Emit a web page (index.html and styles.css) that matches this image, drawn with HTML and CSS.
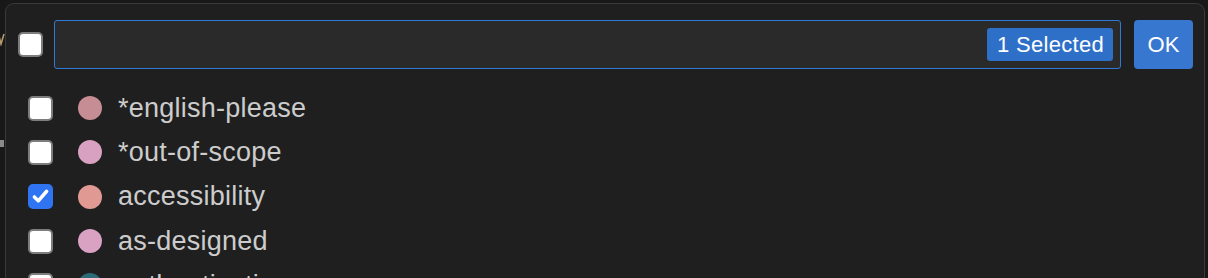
FILE: index.html
```html
<!DOCTYPE html>
<html lang="en">
  <head>
    <meta charset="UTF-8" />
    <meta name="viewport" content="width=device-width, initial-scale=1.0" />
    <title>Labels | Quick Pick</title>
    <link rel="stylesheet" href="styles.css">
  </head>
  <body>
    <div class="editor-edge">
      <svg class="edge-mark" viewBox="0 0 6 16" width="6" height="16">
        <path d="M-2 2l3 12 3-10" fill="none" stroke="#b59a6a" stroke-width="1.6" />
      </svg>
      <span class="edge-block"></span>
    </div>
    <div class="quick-pick">
      <div class="quick-header">
        <span class="check"></span>
        <div class="filter-box">
          <input type="text" />
          <span class="count-badge">1 Selected</span>
        </div>
        <button class="ok-button">OK</button>
      </div>
      <ul class="label-list">
        <li class="label-item">
          <span class="check"></span>
          <span class="dot" style="background: #c78d95"></span>
          <span class="label-name">*english-please</span>
        </li>
        <li class="label-item">
          <span class="check"></span>
          <span class="dot" style="background: #d9a1c1"></span>
          <span class="label-name">*out-of-scope</span>
        </li>
        <li class="label-item">
          <span class="check checked">
            <svg viewBox="0 0 24 24" width="21" height="21">
              <path d="M5 12.5l4.5 4.5L19 6" fill="none" stroke="#fff" stroke-width="4" stroke-linecap="round" stroke-linejoin="round" />
            </svg>
          </span>
          <span class="dot" style="background: #e09a93"></span>
          <span class="label-name">accessibility</span>
        </li>
        <li class="label-item">
          <span class="check"></span>
          <span class="dot" style="background: #d9a1c2"></span>
          <span class="label-name">as-designed</span>
        </li>
        <li class="label-item">
          <span class="check"></span>
          <span class="dot" style="background: #2b6b78"></span>
          <span class="label-name">authentication</span>
        </li>
      </ul>
    </div>
  </body>
</html>
```

FILE: styles.css
```css
* {
  margin: 0;
  padding: 0;
  box-sizing: border-box;
}

body {
  font-family: "Liberation Sans", Arial, sans-serif;
  background-color: #181818;
  color: #cccccc;
  height: 100vh;
  overflow: hidden;
  position: relative;
}

.editor-edge {
  position: absolute;
  left: 0;
  top: 0;
  width: 5px;
  height: 100%;
  overflow: hidden;
}

.edge-mark {
  position: absolute;
  left: 0;
  top: 30px;
}

.edge-block {
  position: absolute;
  left: 0;
  top: 140px;
  width: 4px;
  height: 7px;
  background: #8a8a8a;
}

.quick-pick {
  position: relative;
  margin: 3px 0 0 5px;
  width: 1200px;
  height: 300px;
  background-color: #1f1f1f;
  border: 1px solid #3a3a3a;
  border-bottom: none;
  border-radius: 9px 9px 0 0;
}

.quick-header {
  display: flex;
  align-items: center;
  padding: 16px 11px 0 12px;
}

.check {
  flex: none;
  width: 25px;
  height: 25px;
  background: #ffffff;
  border: 2px solid #7d7d7d;
  border-radius: 5px;
  display: flex;
  align-items: center;
  justify-content: center;
}

.check.checked {
  background: #2f75f2;
  border-color: #2f75f2;
}

.filter-box {
  flex: 1;
  height: 49px;
  margin: 0 13px 0 11px;
  display: flex;
  align-items: center;
  background: #2a2a2a;
  border: 1px solid #2f7ad6;
  border-radius: 3px;
  padding-right: 7px;
}

.filter-box input {
  flex: 1;
  height: 100%;
  background: transparent;
  border: none;
  outline: none;
}

.count-badge {
  height: 33px;
  padding: 0 9px 0 10px;
  display: flex;
  align-items: center;
  background: #2e70c8;
  color: #ffffff;
  font-size: 22px;
  letter-spacing: 0.3px;
  border-radius: 3px;
}

.ok-button {
  width: 59px;
  height: 49px;
  background: #3777d0;
  color: #ffffff;
  border: none;
  border-radius: 4px;
  font-family: inherit;
  font-size: 22px;
}

.label-list {
  list-style: none;
  margin-top: 17px;
}

.label-item {
  height: 44.3px;
  display: flex;
  align-items: center;
  padding-left: 22px;
}

.dot {
  flex: none;
  width: 24px;
  height: 24px;
  border-radius: 50%;
  margin: 0 16px 0 25px;
}

.label-name {
  font-size: 27px;
  letter-spacing: 0.25px;
}
```
